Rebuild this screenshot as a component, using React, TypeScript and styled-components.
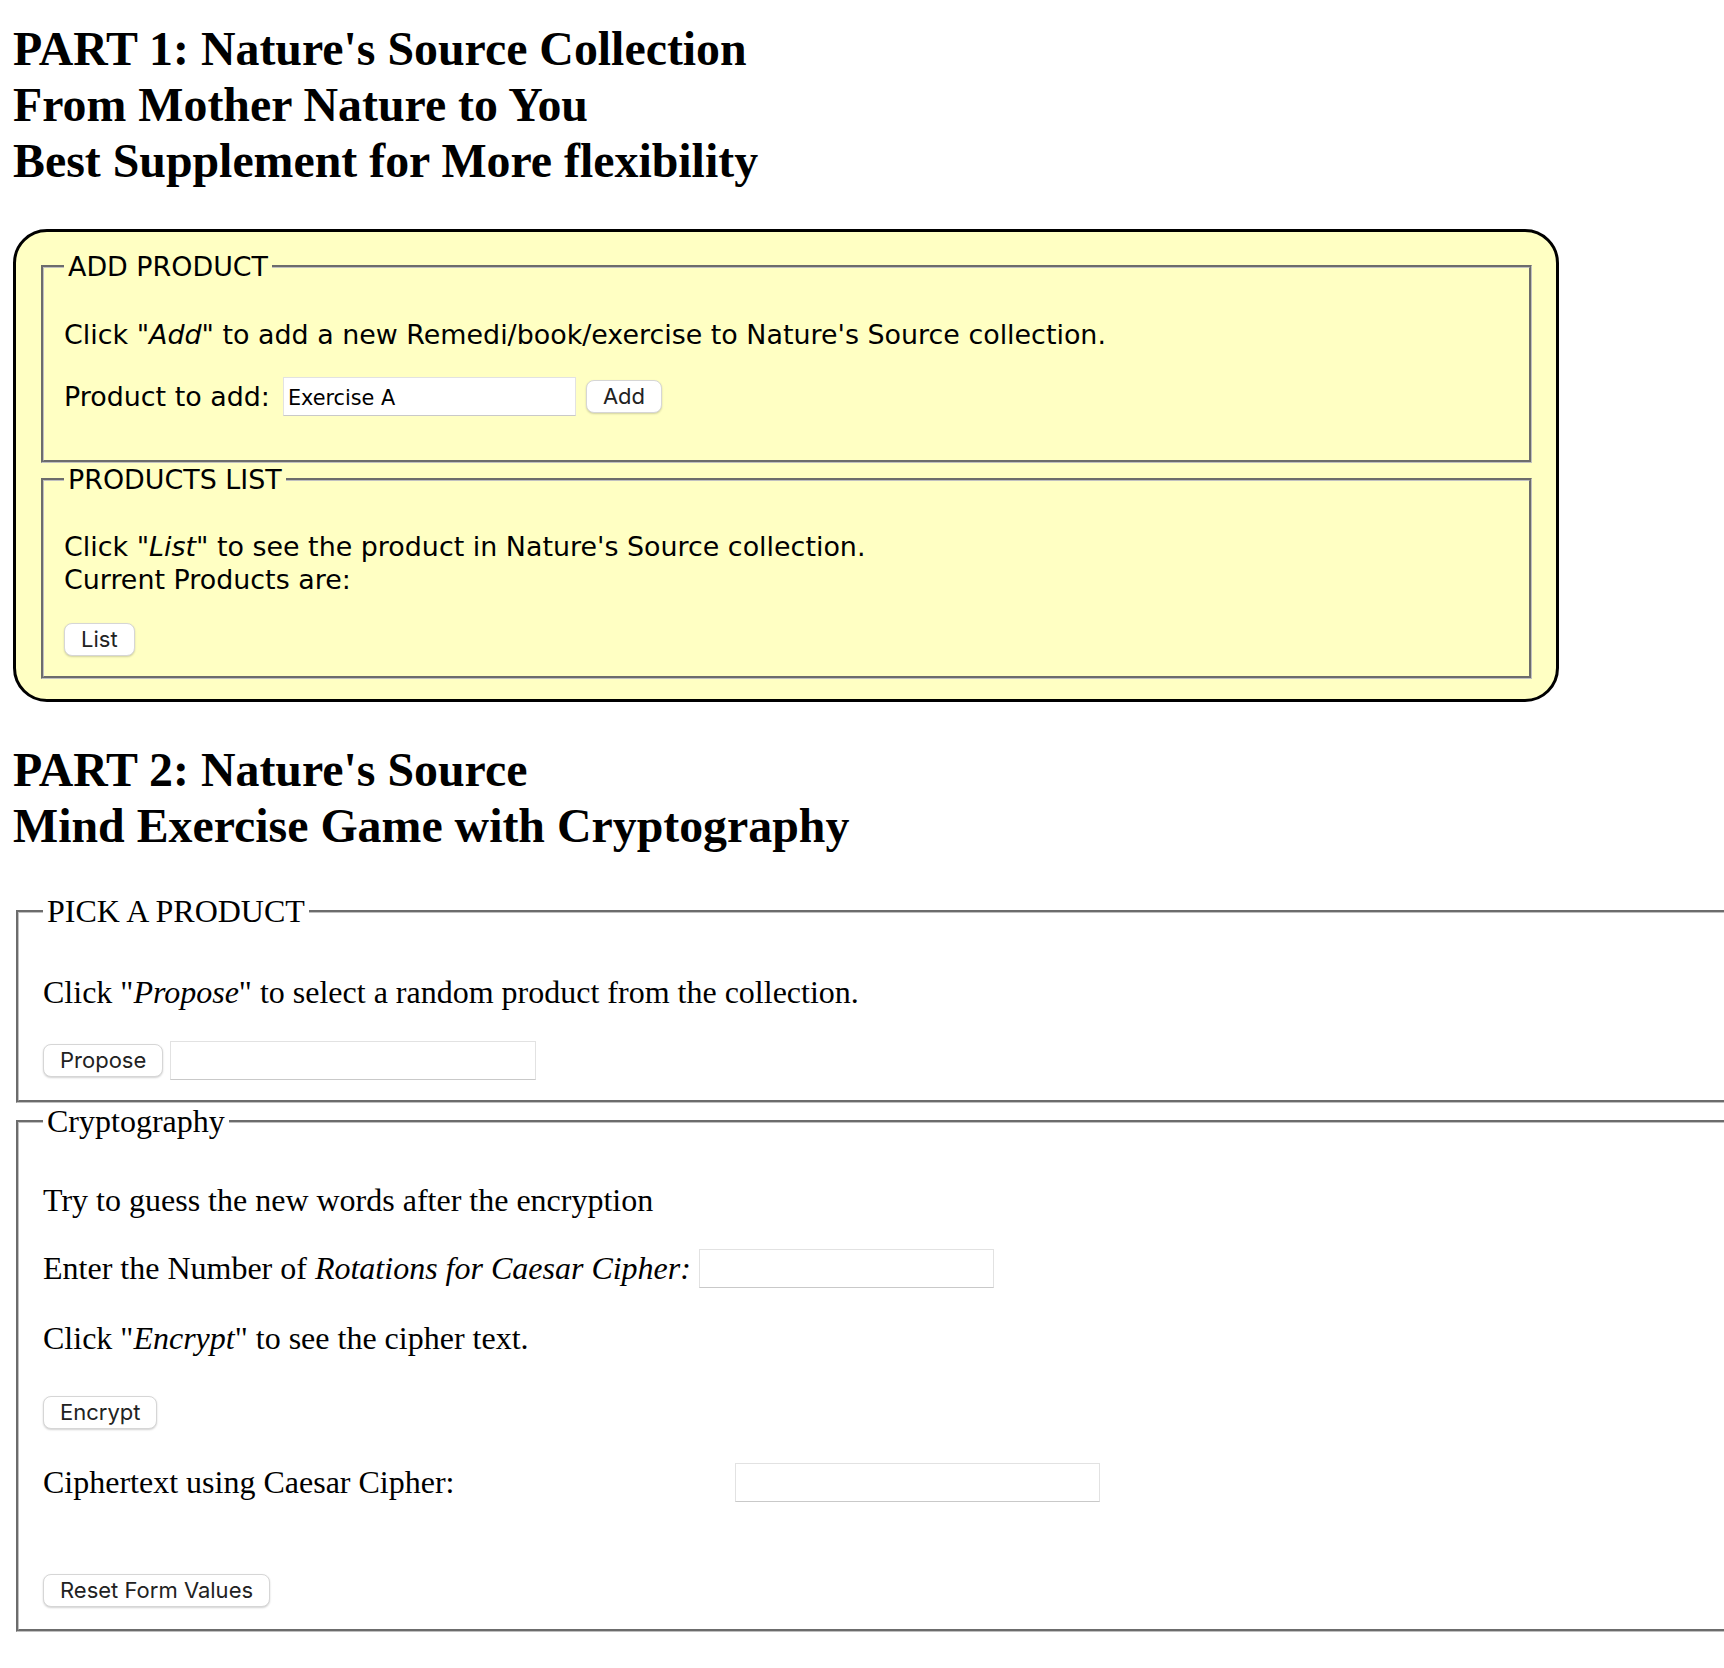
import React from "react";
import styled, { createGlobalStyle } from "styled-components";

const GlobalStyle = createGlobalStyle`
  html, body {
    margin: 0;
    padding: 0;
    background: #ffffff;
  }
  body {
    overflow-x: hidden;
  }
`;

const Page = styled.div`
  padding: 21px 0 40px 13px;
  color: #000;
  font-family: "Liberation Serif", "Times New Roman", serif;
`;

const Title = styled.h2<{ $mt: number }>`
  margin: ${p => p.$mt}px 0 0;
  font-size: 47.85px;
  font-weight: bold;
  line-height: 56px;
`;

const Collection = styled.div`
  box-sizing: border-box;
  width: 1546px;
  margin-top: 40px;
  padding: 18px 24px 20.5px 25px;
  background: #ffffc3;
  border: 3px solid #000;
  border-radius: 34px;
  font-family: "DejaVu Sans", Verdana, sans-serif;
  font-size: 26.9px;
  line-height: 33px;
`;

const PanelSet = styled.fieldset<{ $pb: number }>`
  margin: 0;
  min-width: 0;
  padding: 8px 18px ${p => p.$pb}px 20px;
  border: 3px groove #c0c0c0;
`;

const GameSet = styled.fieldset<{ $pb: number }>`
  margin: 0 0 0 3px;
  min-width: 0;
  padding: 11px 0 ${p => p.$pb}px 24px;
  border: 3px groove #c0c0c0;
  border-right: none;
  font-size: 32px;
  line-height: 37px;
`;

const Legend = styled.legend`
  padding: 0 4px;
`;

const Para = styled.p<{ $mt: number }>`
  margin: ${p => p.$mt}px 0 0;
`;

const Row = styled.div<{ $mt: number; $gap: number }>`
  display: flex;
  align-items: center;
  gap: ${p => p.$gap}px;
  margin-top: ${p => p.$mt}px;
`;

const Label = styled.span<{ $width?: number }>`
  flex: 0 0 ${p => (p.$width ? `${p.$width}px` : "auto")};
`;

const ButtonBar = styled.div<{ $mt: number }>`
  display: flex;
  margin-top: ${p => p.$mt}px;
`;

const Button = styled.button<{ $shift?: number }>`
  box-sizing: border-box;
  height: 33px;
  margin-left: ${p => p.$shift ?? 0}px;
  padding: 0 16px;
  background: #ffffff;
  border: 1px solid #d6d6d6;
  border-radius: 8px;
  box-shadow: 0 1px 2px rgba(0, 0, 0, 0.18);
  color: #222;
  font-family: Inter, "Liberation Sans", Arial, sans-serif;
  font-size: 22px;
  line-height: 31px;
  cursor: pointer;
`;

const Field = styled.input<{ $width: number }>`
  box-sizing: border-box;
  width: ${p => p.$width}px;
  height: 39px;
  padding: 3px 4px 0;
  background: #ffffff;
  border: 1px solid #e2e2e2;
  border-bottom-color: #c9c9c9;
  border-radius: 0;
  color: #000;
  font-family: "DejaVu Sans", Verdana, sans-serif;
  font-size: 20.8px;
  outline: none;
`;

export default function App() {
  return (
    <Page>
      <GlobalStyle />
      <Title $mt={0}>
        PART 1: Nature's Source Collection
        <br />
        From Mother Nature to You
        <br />
        Best Supplement for More flexibility
      </Title>

      <Collection>
        <PanelSet $pb={44}>
          <Legend>ADD PRODUCT</Legend>
          <Para $mt={26.5}>
            Click <em>"Add"</em> to add a new Remedi/book/exercise to Nature's Source collection.
          </Para>
          <Row $mt={26} $gap={13}>
            <Label>Product to add:</Label>
            <Field $width={293} defaultValue="Exercise A" />
            <Button $shift={-3}>Add</Button>
          </Row>
        </PanelSet>
        <PanelSet $pb={20}>
          <Legend>PRODUCTS LIST</Legend>
          <Para $mt={26.5}>
            Click <em>"List"</em> to see the product in Nature's Source collection.
            <br />
            Current Products are:
          </Para>
          <ButtonBar $mt={26.5}>
            <Button>List</Button>
          </ButtonBar>
        </PanelSet>
      </Collection>

      <Title $mt={40}>
        PART 2: Nature's Source
        <br />
        Mind Exercise Game with Cryptography
      </Title>

      <GameSet $pb={19.5} style={{ marginTop: 38.5 }}>
        <Legend>PICK A PRODUCT</Legend>
        <Para $mt={33}>
          Click "<em>Propose</em>" to select a random product from the collection.
        </Para>
        <Row $mt={30.5} $gap={7}>
          <Button>Propose</Button>
          <Field $width={366} />
        </Row>
      </GameSet>

      <GameSet $pb={21.5}>
        <Legend>Cryptography</Legend>
        <Para $mt={31}>Try to guess the new words after the encryption</Para>
        <Row $mt={30.5} $gap={8}>
          <Label>
            Enter the Number of <em>Rotations for Caesar Cipher:</em>
          </Label>
          <Field $width={295} />
        </Row>
        <Para $mt={31.5}>
          Click "<em>Encrypt</em>" to see the cipher text.
        </Para>
        <ButtonBar $mt={39.5}>
          <Button>Encrypt</Button>
        </ButtonBar>
        <Row $mt={34} $gap={0}>
          <Label $width={692}>Ciphertext using Caesar Cipher:</Label>
          <Field $width={365} />
        </Row>
        <ButtonBar $mt={72}>
          <Button>Reset Form Values</Button>
        </ButtonBar>
      </GameSet>
    </Page>
  );
}
